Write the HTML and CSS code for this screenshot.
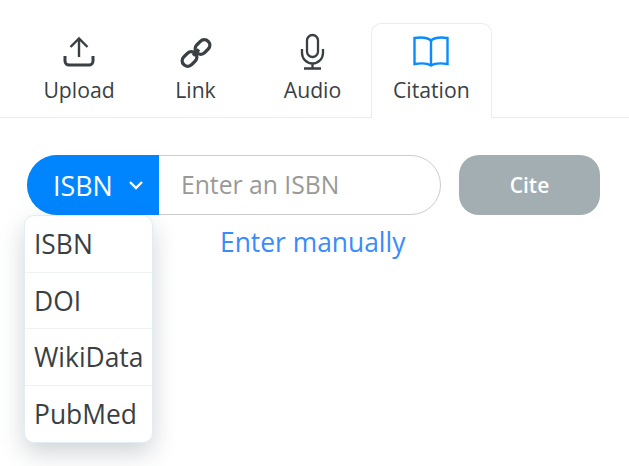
FILE: index.html

```html
<!DOCTYPE html>
<html lang="en">
<head>
  <meta charset="UTF-8" />
  <meta name="viewport" content="width=device-width, initial-scale=1.0"/>
  <title>Add citation</title>
  <link rel="stylesheet" href="styles.css">
</head>
<body>
  <div class="tabs">
    <a class="tab">
      <svg class="tab-icon" viewBox="0 0 32 32" fill="none" stroke="currentColor" stroke-width="2.400">
        <path d="M16 21V2.500M7.500 11L16 2.500l8.500 8.500"/>
        <path d="M2 20v5a4 4 0 0 0 4 4h20a4 4 0 0 0 4-4v-5" stroke-width="3"/>
      </svg>
      <span>Upload</span>
    </a>
    <a class="tab">
      <svg class="tab-icon" viewBox="0 0 32 32" fill="none" stroke="currentColor" stroke-width="3.400">
        <rect x="14.500" y="5.500" width="16" height="11" rx="5.500" transform="rotate(-45 22.500 11)"/>
        <rect x="1.500" y="17.500" width="16" height="11" rx="5.500" transform="rotate(-45 9.500 23)"/>
        <path d="M13 19.500l6-6"/>
      </svg>
      <span>Link</span>
    </a>
    <a class="tab">
      <svg class="tab-icon" viewBox="0 0 32 32" fill="none" stroke="currentColor" stroke-width="2.300">
        <rect x="10" y="-1" width="11" height="22" rx="5.500"/>
        <path d="M5 13v4a10.500 10.500 0 0 0 21 0v-4M15.500 27.500V33M7 32.500h17"/>
      </svg>
      <span>Audio</span>
    </a>
    <a class="tab active">
      <svg class="tab-icon book" viewBox="0 0 36 32" fill="none" stroke="currentColor" stroke-width="2.400">
        <path d="M18 4.500C15 2 8 1 1.500 2v26c6.500-1 13.500-.5 16.500 1.500 3-2 10-2.500 16.500-1.500V2C28 1 21 2 18 4.500z"/>
        <path d="M18 4.500V29"/>
      </svg>
      <span>Citation</span>
    </a>
  </div>

  <div class="cite-row">
    <div class="cite-input">
      <button class="type-btn">ISBN
        <svg class="chevron" viewBox="0 0 16 10" fill="none" stroke="currentColor" stroke-width="2.400"><path d="M2 2l6 6 6-6"/></svg>
      </button>
      <input type="text" placeholder="Enter an ISBN">
      <ul class="type-menu">
        <li>ISBN</li>
        <li>DOI</li>
        <li>WikiData</li>
        <li>PubMed</li>
      </ul>
    </div>
    <button class="cite-btn">Cite</button>
  </div>
  <a class="manual">Enter manually</a>
</body>
</html>
```

FILE: styles.css

```css
html, body { height: 100%; }
body { margin: 0; font-family: 'Open Sans', 'Noto Sans', sans-serif; background: #fff; color: #3a3f44; overflow: hidden; }

.tabs { display: flex; height: 94px; margin-top: 23px; padding-left: 21px; border-bottom: 1px solid #eaecef; }
.tab { box-sizing: border-box; min-width: 117px; height: 95px; padding: 12px 21px 0; display: flex; flex-direction: column; align-items: center; font-size: 21.200px; line-height: 27px; border: 1px solid transparent; border-bottom: 0; }
.tab:first-child { min-width: 116px; }
.tab-icon { width: 32px; height: 32px; margin-bottom: 8px; overflow: visible; }
.tab-icon.book { width: 36px; }
.tab.active { background: #fff; border-color: #eaecef; border-radius: 10px 10px 0 0; }
.tab.active .tab-icon { color: #0a8cff; }

.cite-row { display: flex; gap: 18px; margin: 37px 0 0 27px; }
.cite-input { position: relative; display: flex; width: 414px; height: 60px; box-sizing: border-box; border: 1px solid #ccc; border-radius: 30px; }
.type-btn { display: flex; align-items: center; gap: 15px; width: 132px; margin: -1px 0 -1px -1px; padding: 0 0 0 26px; border: 0; border-radius: 30px 0 0 30px; background: #0085ff; color: #fff; font: inherit; font-size: 26.800px; }
.chevron { width: 16px; height: 10px; }
.cite-input input { flex: 1; min-width: 0; padding: 0 0 2px 22px; border: 0; border-radius: 0 30px 30px 0; background: transparent; font: inherit; font-size: 24.700px; outline: none; }
.cite-input input::placeholder { color: #999; opacity: 1; }

.type-menu { position: absolute; top: 59px; left: -4px; width: 129px; box-sizing: border-box; margin: 0; padding: 0.400px 0 0; list-style: none; background: #fff; border: 1px solid #e3ecf1; border-radius: 10px; box-shadow: 0 10px 24px rgba(40, 60, 70, 0.22); font-size: 26.400px; color: #3a3f44; }
.type-menu li { height: 56.400px; line-height: 57px; padding-left: 9px; border-bottom: 1px solid #eef1f3; box-sizing: border-box; white-space: nowrap; }
.type-menu li:last-child { border-bottom: 0; }

.cite-btn { width: 141px; height: 60px; padding: 0; border: 0; border-radius: 20px; background: #a3aeb2; color: #fff; font: inherit; font-size: 21px; font-weight: 600; }

.manual { display: block; width: 186px; margin: 9px 0 0 220px; color: #3a8bff; font-size: 26.400px; line-height: 36px; white-space: nowrap; }
```
